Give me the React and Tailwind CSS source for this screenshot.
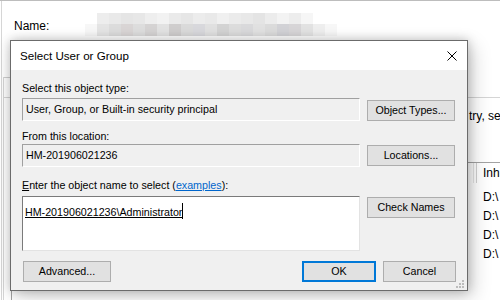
import React from "react";

const topTiles = [
  "#ededed", "#e9e9e9", "#e5e5e5", "#e7e7e7", "#eeeeee", "#f2f2f2",
  "#eaeaea", "#e6e6e6", "#ececec", "#e9e9e9", "#f0f0f0", "#ebebeb",
  "#e8e8e8", "#e4e4e4", "#ececec", "#f3f3f3", "#ededed", "#f6f6f6",
];
const bottomTiles = [
  "#f7f7f7", "#e4e4e4", "#dcdcdc", "#d9d5d5", "#dddddd", "#d5d3d3",
  "#e2e2e2", "#cfcdcd", "#dadada", "#d8d8dc", "#e0e0e0", "#d3d3d3",
  "#dcdcdc", "#d9d9db", "#e1e1e1", "#dbdbdb", "#d2d2d6", "#d7d5d7",
  "#e2e2e2", "#eeeeee", "#f7f7f7",
];

function Button({ children, className = "" }) {
  return (
    <div
      className={`flex items-center justify-center h-[21px] bg-[#e1e1e1] border border-[#adadad] text-black ${className}`}
    >
      {children}
    </div>
  );
}

export default function App() {
  return (
    <div className="relative w-[500px] h-[300px] overflow-hidden bg-white font-['Liberation_Sans',Arial,sans-serif] text-black">
      {/* window behind the dialog */}
      <div className="h-full border-t border-[#bdbdbd] pl-px">
        <div className="h-full border-l border-[#d6d6d6]">
          <div className="flex items-start pt-[12px] pl-[12px]">
            <span className="w-[71px] mt-[6px] text-[12px] leading-[14px]">Name:</span>
            <div className="flex flex-col">
              <div className="flex pl-[12px]">
                {topTiles.map((c, i) => (
                  <div key={i} className="w-[12px] h-[11px]" style={{ background: c }} />
                ))}
              </div>
              <div className="flex">
                {bottomTiles.map((c, i) => (
                  <div key={i} className="w-[12px] h-[12px]" style={{ background: c }} />
                ))}
              </div>
            </div>
          </div>

          <div className="mt-[41px] ml-px h-full border-l border-[#d6d6d6]">
            <div className="w-[8px] h-px bg-[#cfcfcf]" />
            <div className="mt-[19px] h-px bg-[#d5d5d5]" />
            <div className="mt-[11px] pl-[465px] whitespace-nowrap text-[12px] leading-[14px]">
              try, se
            </div>
            <div className="mt-[39px] ml-[7px] h-full border-l border-t border-[#a3a3a3]">
              <div className="flex h-[20px] items-center text-[12px]">
                <div className="w-[462px] h-full border-r border-[#e5e5e5]" />
                <div className="ml-[2px] w-px h-full bg-[#d0d0d0]" />
                <span className="pl-[6px]">Inh</span>
              </div>
              <div className="mt-[5px] text-[12px] leading-[19px]">
                {[0, 1, 2, 3].map((i) => (
                  <div key={i} className="pl-[471px] whitespace-nowrap">
                    D:\
                  </div>
                ))}
              </div>
            </div>
          </div>
        </div>
      </div>

      {/* Select User or Group dialog */}
      <div className="absolute left-[10px] top-[40px] w-[458px] h-[251px] border border-[#6b6b6b] bg-[#f0f0f0] shadow-[0_0_10px_rgba(0,0,0,0.22),5px_6px_18px_rgba(0,0,0,0.18)]">
        <div className="flex h-[29px] items-center justify-between bg-white pl-[9px] pr-[10px]">
          <span className="text-[11.6px]">Select User or Group</span>
          <svg width="10" height="10" viewBox="0 0 10 10" className="block">
            <path d="M0.5 0.5 L9.5 9.5 M9.5 0.5 L0.5 9.5" stroke="#000" strokeWidth="1" fill="none" />
          </svg>
        </div>

        <div className="relative px-[11px] pt-[12px] text-[10.7px] leading-[13px]">
          <div>Select this object type:</div>
          <div className="mt-[3px] flex items-start gap-[7px]">
            <div className="flex h-[23px] w-[338px] items-center border border-[#a0a0a0] border-r-white border-b-white pl-[3px]">
              User, Group, or Built-in security principal
            </div>
            <Button className="mt-[2px] w-[88px]">Object Types...</Button>
          </div>

          <div className="mt-[9px]">From this location:</div>
          <div className="mt-[1px] flex items-start gap-[7px]">
            <div className="flex h-[23px] w-[338px] items-center border border-[#a0a0a0] border-r-white border-b-white pl-[3px]">
              HM-201906021236
            </div>
            <Button className="mt-[1px] w-[88px]">Locations...</Button>
          </div>

          <div className="mt-[12px]">
            <span className="underline">E</span>nter the object name to select (
            <span className="text-[#0066cc] underline">examples</span>):
          </div>
          <div className="mt-[4px] flex items-start gap-[7px]">
            <div className="h-[55px] w-[338px] border border-[#7a7a7a] border-r-[#e3e3e3] border-b-[#e3e3e3] bg-white pl-[2px] pt-[6px]">
              <span className="underline">HM-201906021236\Administrator</span>
              <span className="inline-block w-px h-[16px] bg-black align-[-3px]" />
            </div>
            <Button className="mt-[1px] w-[88px]">Check Names</Button>
          </div>

          <div className="mt-[10px] flex items-center">
            <Button className="ml-px w-[88px]">Advanced...</Button>
            <div className="ml-auto flex gap-[7px]">
              <div className="flex h-[21px] w-[74px] items-center justify-center border-2 border-[#0078d7] bg-[#e1e1e1]">
                OK
              </div>
              <Button className="w-[73px]">Cancel</Button>
            </div>
          </div>
        </div>

        {/* size grip */}
        <svg width="8" height="8" viewBox="0 0 8 8" className="absolute right-[3px] bottom-[2px]">
          <rect x="6" y="0" width="2" height="2" fill="#bcbcbc" />
          <rect x="3" y="3" width="2" height="2" fill="#bcbcbc" />
          <rect x="6" y="3" width="2" height="2" fill="#bcbcbc" />
          <rect x="0" y="6" width="2" height="2" fill="#bcbcbc" />
          <rect x="3" y="6" width="2" height="2" fill="#bcbcbc" />
          <rect x="6" y="6" width="2" height="2" fill="#bcbcbc" />
        </svg>
      </div>
    </div>
  );
}
